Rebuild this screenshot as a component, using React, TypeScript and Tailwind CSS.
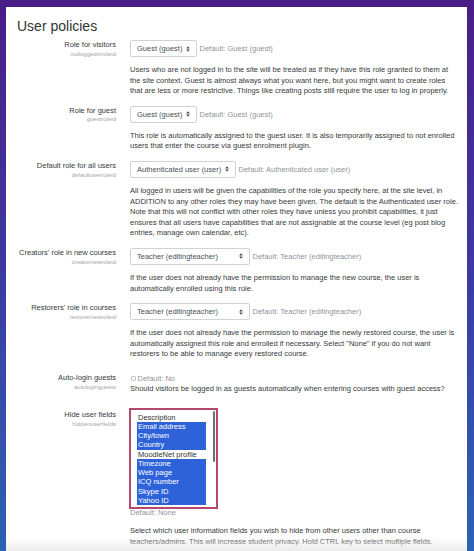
import React from 'react'

interface RoleSetting {
  label: string
  name: string
  value: string
  width: string
  defaultText: string
  description: string
}

const roleSettings: RoleSetting[] = [
  {
    label: 'Role for visitors',
    name: 'notloggedinroleid',
    value: 'Guest (guest)',
    width: 'w-[67px]',
    defaultText: 'Default: Guest (guest)',
    description:
      'Users who are not logged in to the site will be treated as if they have this role granted to them at the site context. Guest is almost always what you want here, but you might want to create roles that are less or more restrictive. Things like creating posts still require the user to log in properly.'
  },
  {
    label: 'Role for guest',
    name: 'guestroleid',
    value: 'Guest (guest)',
    width: 'w-[67px]',
    defaultText: 'Default: Guest (guest)',
    description:
      'This role is automatically assigned to the guest user. It is also temporarily assigned to not enrolled users that enter the course via guest enrolment plugin.'
  },
  {
    label: 'Default role for all users',
    name: 'defaultuserroleid',
    value: 'Authenticated user (user)',
    width: 'w-[106px]',
    defaultText: 'Default: Authenticated user (user)',
    description:
      'All logged in users will be given the capabilities of the role you specify here, at the site level, in ADDITION to any other roles they may have been given. The default is the Authenticated user role. Note that this will not conflict with other roles they have unless you prohibit capabilities, it just ensures that all users have capabilities that are not assignable at the course level (eg post blog entries, manage own calendar, etc).'
  },
  {
    label: "Creators' role in new courses",
    name: 'creatornewroleid',
    value: 'Teacher (editingteacher)',
    width: 'w-[120px]',
    defaultText: 'Default: Teacher (editingteacher)',
    description:
      'If the user does not already have the permission to manage the new course, the user is automatically enrolled using this role.'
  },
  {
    label: "Restorers' role in courses",
    name: 'restorernewroleid',
    value: 'Teacher (editingteacher)',
    width: 'w-[120px]',
    defaultText: 'Default: Teacher (editingteacher)',
    description:
      'If the user does not already have the permission to manage the newly restored course, the user is automatically assigned this role and enrolled if necessary. Select "None" if you do not want restorers to be able to manage every restored course.'
  }
]

const userFields = [
  { name: 'Description', selected: false },
  { name: 'Email address', selected: true },
  { name: 'City/town', selected: true },
  { name: 'Country', selected: true },
  { name: 'MoodleNet profile', selected: false },
  { name: 'Timezone', selected: true },
  { name: 'Web page', selected: true },
  { name: 'ICQ number', selected: true },
  { name: 'Skype ID', selected: true },
  { name: 'Yahoo ID', selected: true }
]

function FieldLabel({ label, name, className = '' }: { label: string; name: string; className?: string }) {
  return (
    <div className={`w-[99px] shrink-0 text-right ${className}`}>
      <div className="text-[7.5px] leading-[10.6px] text-[#373a3c]">{label}</div>
      <div className="text-[6px] leading-[7px] text-[#a3a6a9]">{name}</div>
    </div>
  )
}

function SelectArrows() {
  return (
    <svg width="4" height="6" viewBox="0 0 4 6" className="shrink-0">
      <path d="M0.2 2.4 L2 0.2 L3.8 2.4 Z" fill="#4a4a4a" />
      <path d="M0.2 3.6 L2 5.8 L3.8 3.6 Z" fill="#4a4a4a" />
    </svg>
  )
}

export default function App() {
  return (
    <div className="h-[551px] w-[474px] overflow-hidden bg-linear-to-b from-[#4a1c88] via-[#3b3aa2] to-[#2a62b4] pl-[6px] pr-[7px] pt-[7px] font-['Liberation_Sans',Arial,sans-serif]">
      <div className="relative h-full overflow-hidden bg-white pl-[11px] pr-[9px] pt-[11px]">
        <h2 className="mb-[5px] text-[14px] leading-[17px] text-[#333]">User policies</h2>

        {roleSettings.map((setting) => (
          <div key={setting.name} className="mb-[9px] flex">
            <FieldLabel label={setting.label} name={setting.name} />
            <div className="ml-[14px] w-[328px]">
              <div className="flex items-center">
                <div
                  className={`${setting.width} flex h-[17px] items-center justify-between rounded-[2px] border border-[#cfd3d7] bg-white pl-[6px] pr-[6px] text-[7.5px] text-[#495057]`}
                >
                  <span>{setting.value}</span>
                  <SelectArrows />
                </div>
                <span className="ml-[2.5px] text-[7.5px] text-[#8f959b]">{setting.defaultText}</span>
              </div>
              <p className="mt-[8px] text-[7.5px] leading-[10.6px] text-[#373a3c]">{setting.description}</p>
            </div>
          </div>
        ))}

        {/* Auto-login guests */}
        <div className="mt-[13px] flex">
          <FieldLabel label="Auto-login guests" name="autologinguests" />
          <div className="ml-[14px] w-[328px]">
            <div className="flex h-[10.6px] items-center">
              <span className="ml-px h-[5px] w-[5px] rounded-[1px] border border-[#c4c8cc] bg-white" />
              <span className="ml-[1.5px] text-[7.5px] text-[#8f959b]">Default: No</span>
            </div>
            <p className="text-[7.5px] leading-[10.6px] text-[#373a3c]">
              Should visitors be logged in as guests automatically when entering courses with guest access?
            </p>
          </div>
        </div>

        {/* Hide user fields */}
        <div className="mt-[14px] flex">
          <FieldLabel label="Hide user fields" name="hiddenuserfields" className="pt-[2px]" />
          <div className="ml-[14px] w-[328px]">
            <div className="relative -ml-px h-[101px] w-[89px] border-2 border-[#b5486f] bg-white pl-[6px] pt-[2.5px]">
              {userFields.map((field) => (
                <div
                  key={field.name}
                  className={`w-[69px] pl-px text-[7.5px] leading-[9.25px] ${
                    field.selected ? 'bg-[#2e62d9] text-white' : 'text-[#333]'
                  }`}
                >
                  {field.name}
                </div>
              ))}
              <div className="absolute right-px top-px h-[51px] w-[2.5px] rounded-full bg-[#6e6e6e]" />
            </div>
            <div className="-mt-px text-[7.5px] leading-[10.6px] text-[#8f959b]">Default: None</div>
            <p className="mt-[7.5px] text-[7.5px] leading-[10.6px] text-[#373a3c]">
              Select which user information fields you wish to hide from other users other than course
              teachers/admins. This will increase student privacy. Hold CTRL key to select multiple fields.
            </p>
          </div>
        </div>

        <div className="pointer-events-none absolute bottom-0 left-0 right-0 h-[14px] bg-linear-to-b from-white/0 to-[#ebebeb]" />
      </div>
    </div>
  )
}
